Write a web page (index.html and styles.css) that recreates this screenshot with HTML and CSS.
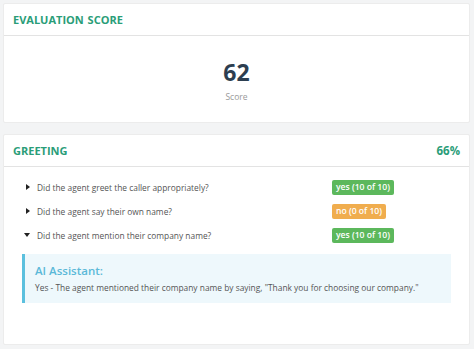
FILE: index.html
```html
<!DOCTYPE html>
<html lang="en">
<head>
    <meta charset="UTF-8">
    <title>Evaluation</title>
    <link rel="stylesheet" href="styles.css">
</head>
<body>
    <div class="card">
        <div class="card-header">
            <h2>Evaluation Score</h2>
        </div>
        <div class="score-body">
            <div class="score-value">62</div>
            <div class="score-label">Score</div>
        </div>
    </div>

    <div class="card card-section">
        <div class="card-header">
            <h2>Greeting</h2>
            <span class="percent">66%</span>
        </div>
        <ul class="questions">
            <li class="question">
                <span class="caret"></span>
                <span class="q-text">Did the agent greet the caller appropriately?</span>
                <span class="badge badge-yes">yes (10 of 10)</span>
            </li>
            <li class="question">
                <span class="caret"></span>
                <span class="q-text">Did the agent say their own name?</span>
                <span class="badge badge-no">no (0 of 10)</span>
            </li>
            <li class="question open">
                <span class="caret"></span>
                <span class="q-text">Did the agent mention their company name?</span>
                <span class="badge badge-yes">yes (10 of 10)</span>
            </li>
        </ul>
        <div class="assistant">
            <h4>AI Assistant:</h4>
            <p>Yes - The agent mentioned their company name by saying, "Thank you for choosing our company."</p>
        </div>
    </div>
</body>
</html>
```

FILE: styles.css
```css
body {
    font-family: 'Open Sans', sans-serif;
    background-color: #f3f4f5;
    color: #555;
    margin: 0;
    padding: 3px 4px 4px 3px;
}
.card {
    background: #fff;
    border: 1px solid #ececec;
    border-radius: 2px;
    margin-bottom: 11px;
}
.card-header {
    display: flex;
    justify-content: space-between;
    align-items: center;
    height: 31px;
    padding: 0 9px;
    border-bottom: 1px solid #e3e3e3;
}
.card-header h2 {
    margin: 0;
    font-size: 11px;
    font-weight: 700;
    letter-spacing: 0;
    word-spacing: 1px;
    text-transform: uppercase;
    color: #2a9d78;
}
.percent {
    font-size: 11.5px;
    font-weight: 700;
    color: #2a9d78;
}
.score-body {
    height: 86px;
    display: flex;
    flex-direction: column;
    align-items: center;
    padding-top: 22px;
    box-sizing: border-box;
}
.score-value {
    font-size: 23px;
    font-weight: 700;
    line-height: 28px;
    color: #2d3e50;
}
.score-label {
    font-size: 8.5px;
    color: #999;
    margin-top: 5px;
}
.card-section {
    height: 209px;
    margin-bottom: 0;
}
.questions {
    list-style: none;
    margin: 0;
    padding: 8px 0 0 20px;
}
.question {
    display: grid;
    grid-template-columns: 13px 295px auto;
    align-items: center;
    height: 24px;
}
.caret {
    width: 0;
    height: 0;
    margin-left: 2px;
    border-top: 3px solid transparent;
    border-bottom: 3px solid transparent;
    border-left: 4px solid #222;
}
.open .caret {
    margin-left: 0;
    border-left: 3px solid transparent;
    border-right: 3px solid transparent;
    border-top: 4px solid #222;
    border-bottom: none;
}
.q-text {
    font-size: 8.4px;
    color: #555;
}
.badge {
    justify-self: start;
    font-size: 8.6px;
    font-weight: 600;
    color: #fff;
    padding: 0 4px;
    line-height: 15px;
    border-radius: 2px;
}
.badge-yes {
    background-color: #5cb85c;
}
.badge-no {
    background-color: #f0ad4e;
}
.assistant {
    margin: 7px 18px 0 18px;
    background-color: #eef8fc;
    border-left: 3px solid #5bc0de;
    padding: 9px 10px 10px 10px;
}
.assistant h4 {
    margin: 0 0 4px;
    font-size: 11.5px;
    font-weight: 600;
    color: #5bb8d8;
}
.assistant p {
    margin: 0;
    font-size: 8.4px;
    color: #555;
}
```
